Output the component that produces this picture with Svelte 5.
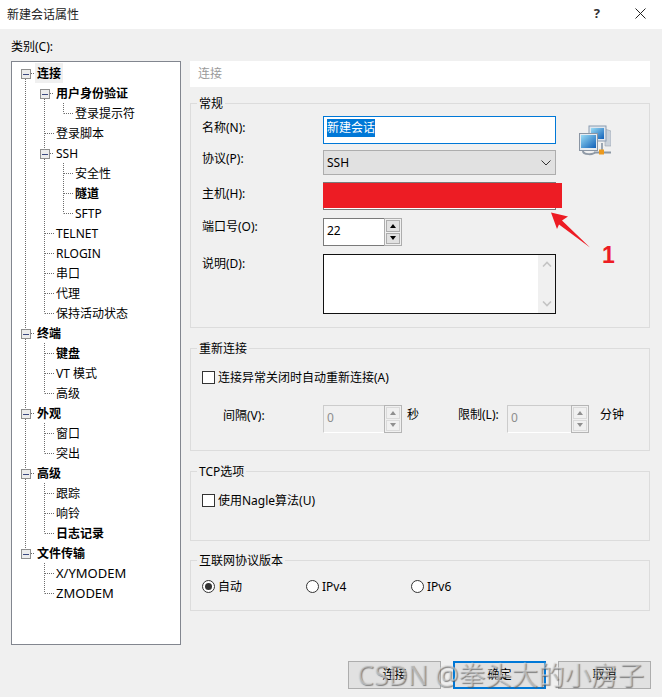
<script>
	// g: one guide cell per tree column. v line, t tee, l elbow, e/d/u expander (both, down, up)
	const rows = [
		{ t: '连接', g: ['d'], b: true, sel: true },
		{ t: '用户身份验证', g: ['v', 'd'], b: true },
		{ t: '登录提示符', g: ['v', 'v', 'l'] },
		{ t: '登录脚本', g: ['v', 't'] },
		{ t: 'SSH', g: ['v', 'e'] },
		{ t: '安全性', g: ['v', 'v', 't'] },
		{ t: '隧道', g: ['v', 'v', 't'], b: true },
		{ t: 'SFTP', g: ['v', 'v', 'l'] },
		{ t: 'TELNET', g: ['v', 't'] },
		{ t: 'RLOGIN', g: ['v', 't'] },
		{ t: '串口', g: ['v', 't'] },
		{ t: '代理', g: ['v', 't'] },
		{ t: '保持活动状态', g: ['v', 'l'] },
		{ t: '终端', g: ['e'], b: true },
		{ t: '键盘', g: ['v', 't'], b: true },
		{ t: 'VT 模式', g: ['v', 't'] },
		{ t: '高级', g: ['v', 'l'] },
		{ t: '外观', g: ['e'], b: true },
		{ t: '窗口', g: ['v', 't'] },
		{ t: '突出', g: ['v', 'l'] },
		{ t: '高级', g: ['e'], b: true },
		{ t: '跟踪', g: ['v', 't'] },
		{ t: '响铃', g: ['v', 't'] },
		{ t: '日志记录', g: ['v', 'l'], b: true },
		{ t: '文件传输', g: ['u'], b: true },
		{ t: 'X/YMODEM', g: ['', 't'], wide: true },
		{ t: 'ZMODEM', g: ['', 'l'], wide: true }
	];
</script>

{#snippet guide(kind)}
	<svg class="guide" width="19" height="20" viewBox="0 0 19 20">
		<g stroke="#6d6d6d" stroke-dasharray="1 1" fill="none">
			{#if kind === 'v' || kind === 't' || kind === 'e' || kind === 'd' || kind === 'u'}
				<path d="M9.5 {kind === 'd' ? 10 : 0}V{kind === 'u' ? 10 : 20}" />
			{/if}
			{#if kind === 'l'}
				<path d="M9.5 0V10.5" />
			{/if}
			{#if kind === 't' || kind === 'l'}
				<path d="M10 10.5H19" />
			{/if}
			{#if kind === 'e' || kind === 'd' || kind === 'u'}
				<path d="M15 10.5H19" />
			{/if}
		</g>
		{#if kind === 'e' || kind === 'd' || kind === 'u'}
			<rect x="5.5" y="6.5" width="9" height="9" fill="#ececec" stroke="#8f8f8f" />
			<path d="M7 11.5H13" stroke="#3c4a80" />
		{/if}
	</svg>
{/snippet}

{#snippet spin(value, off, width = 79)}
	<div class="spin" class:off style="width: {width}px">
		<div class="spin-val">{value}</div>
		<div class="spin-btns">
			<span class="spin-btn"><i class="up"></i></span>
			<span class="spin-btn"><i class="down"></i></span>
		</div>
	</div>
{/snippet}

<div class="dialog">
	<header class="titlebar">
		<span>新建会话属性</span>
		<span class="help">?</span>
		<svg class="close" width="11" height="11" viewBox="0 0 11 11">
			<path d="M.5 .5L10.5 10.5M10.5 .5L.5 10.5" stroke="#222" fill="none" />
		</svg>
	</header>

	<div class="content">
		<aside class="left">
			<div class="cat-label">类别(C):</div>
			<div class="tree">
				{#each rows as row}
					<div class="row">
						{#each row.g as kind}
							{@render guide(kind)}
						{/each}
						<span class="node" class:bold={row.b} class:sel={row.sel} class:wide={row.wide}>{row.t}</span>
					</div>
				{/each}
			</div>
		</aside>

		<main class="right">
			<div class="crumb">连接</div>

			<section class="group general">
				<div class="legend">常规</div>
				<div class="form">
					<label class="pad">名称(N):</label>
					<div class="input active"><span class="selected">新建会话</span></div>
					<svg class="net-icon" width="32" height="32" viewBox="0 0 32 32">
						<defs>
							<linearGradient id="screen" x1="0" y1="0" x2="1" y2="1">
								<stop offset="0" stop-color="#9adcf5" />
								<stop offset="1" stop-color="#0f5fb8" />
							</linearGradient>
						</defs>
						<path d="M26 4l6 2v15h-6z" fill="#c9d1da" stroke="#9aa6b3" stroke-width=".6" />
						<rect x="10" y="1" width="17" height="15" fill="#dfe6ee" stroke="#8a9bb0" />
						<rect x="12" y="3" width="13" height="11" fill="url(#screen)" />
						<rect x=".5" y="8.5" width="18" height="17" fill="#e6ebf1" stroke="#8a95a3" />
						<rect x="2" y="10" width="15" height="13" fill="url(#screen)" />
						<path d="M4 26c0 4 11 4 12 1" fill="none" stroke="#8f99a5" stroke-width="2" />
						<path d="M15 27.5H32" stroke="#8d98a5" stroke-width="2" />
						<path d="M23 18v7" stroke="#9aa6b3" stroke-width="2" />
						<rect x="20" y="24.5" width="5" height="5" fill="#ec9a1e" />
					</svg>

					<label>协议(P):</label>
					<div class="select">
						<span>SSH</span>
						<svg width="10" height="6" viewBox="0 0 10 6">
							<path d="M.5 .5L5 5L9.5 .5" stroke="#333" fill="none" />
						</svg>
					</div>

					<label class="pad">主机(H):</label>
					<div class="input"></div>

					<label>端口号(O):</label>
					{@render spin('22', false)}

					<label class="desc">说明(D):</label>
					<div class="textarea">
						<div class="scroll">
							<svg width="10" height="6" viewBox="0 0 10 6">
								<path d="M1 5.5L5 1.5L9 5.5" stroke="#c4c4c4" stroke-width="1.6" fill="none" />
							</svg>
							<svg width="10" height="6" viewBox="0 0 10 6">
								<path d="M1 .5L5 4.5L9 .5" stroke="#c4c4c4" stroke-width="1.6" fill="none" />
							</svg>
						</div>
					</div>
				</div>
			</section>

			<section class="group reconnect">
				<div class="legend">重新连接</div>
				<div class="check"><span class="box"></span><span class="txt">连接异常关闭时自动重新连接(A)</span></div>
				<div class="retry">
					<span class="retry-label">间隔(V):</span>
					{@render spin('0', true)}
					<span class="unit-sec">秒</span>
					<span class="limit-label">限制(L):</span>
					{@render spin('0', true, 82)}
					<span class="unit-min">分钟</span>
				</div>
			</section>

			<section class="group tcp">
				<div class="legend">TCP选项</div>
				<div class="check"><span class="box"></span><span class="txt">使用Nagle算法(U)</span></div>
			</section>

			<section class="group ipver">
				<div class="legend">互联网协议版本</div>
				<div class="radios">
					<div class="radio r1"><span class="dot on"></span><span class="txt">自动</span></div>
					<div class="radio r2"><span class="dot"></span><span class="txt">IPv4</span></div>
					<div class="radio"><span class="dot"></span><span class="txt">IPv6</span></div>
				</div>
			</section>
		</main>
	</div>

	<footer class="buttons">
		<button>连接</button>
		<button class="primary">确定</button>
		<button>取消</button>
	</footer>

	<!-- annotations pasted over the screenshot -->
	<div class="redact"></div>
	<svg class="arrow" width="50" height="45" viewBox="0 0 50 45">
		<path d="M1 .5L18 4.5L12 8.5L40 35.5L9 12.5L7 17z" fill="#ed1c24" />
	</svg>
	<div class="num">1</div>
	<div class="watermark">CSDN @拳头大的小房子</div>
</div>

<style>
	:global(body) {
		margin: 0;
	}

	.dialog {
		position: relative;
		width: 662px;
		height: 697px;
		overflow: hidden;
		background: #f0f0f0;
		color: #000;
		font-family: "Noto Sans", "Noto Sans CJK SC", sans-serif;
		font-size: 12px;
		line-height: 18px;
	}

	.titlebar {
		display: flex;
		align-items: center;
		height: 29px;
		padding-left: 7px;
		box-sizing: border-box;
		background: #fff;
		color: #222;
	}

	.help {
		margin-left: auto;
		margin-bottom: 3px;
		font-size: 13px;
		font-weight: 700;
		color: #333;
	}

	.close {
		margin-left: 35px;
		margin-right: 16px;
		margin-bottom: 2px;
	}

	.content {
		display: flex;
		height: 616px;
	}

	.left {
		width: 190px;
		padding: 9px 0 0 11px;
		box-sizing: border-box;
	}

	.cat-label {
		margin-bottom: 5px;
	}

	.tree {
		width: 170px;
		height: 584px;
		box-sizing: border-box;
		padding: 1px 0 0 4px;
		background: #fff;
		border: 1px solid #82868f;
	}

	.row {
		display: flex;
		height: 20px;
		white-space: nowrap;
	}

	.guide {
		display: block;
		flex: none;
	}

	.node {
		height: 20px;
		padding: 0 2px;
		line-height: 22px;
	}

	.bold {
		font-weight: 700;
	}

	.wide {
		font-size: 13px;
		line-height: 20px;
	}

	.sel {
		background: #f0f0f0;
	}

	.right {
		width: 460px;
		padding-top: 32px;
	}

	.crumb {
		height: 26px;
		padding-left: 8px;
		line-height: 26px;
		background: #fff;
		color: #9a9a9a;
	}

	.group {
		box-sizing: border-box;
		border: 1px solid #dcdcdc;
		padding-left: 11px;
	}

	.legend {
		width: fit-content;
		margin: -11px 0 0 -5px;
		padding: 2px 2px 0;
		background: #f0f0f0;
	}

	.general {
		height: 225px;
		margin-top: 16px;
	}

	.reconnect {
		height: 103px;
		margin-top: 20px;
	}

	.tcp {
		height: 70px;
		margin-top: 20px;
	}

	.ipver {
		height: 51px;
		margin-top: 19px;
	}

	.form {
		display: grid;
		grid-template-columns: 121px 233px 32px;
		grid-template-rows: 34px 32px 36px 36px 60px;
		align-items: start;
		margin-top: 3px;
	}

	.form label {
		grid-column: 1;
	}

	.form .pad {
		padding-top: 3px;
	}

	.form .desc {
		padding-top: 1px;
	}

	.input {
		grid-column: 2;
		height: 28px;
		box-sizing: border-box;
		padding: 2px 3px;
		background: #fff;
		border: 1px solid #7a7a7a;
	}

	.active {
		border-color: #0078d7;
	}

	.selected {
		display: inline-block;
		background: #0078d7;
		color: #fff;
	}

	.net-icon {
		grid-column: 3;
		grid-row: 1 / span 2;
		margin: 9px 0 0 23px;
	}

	.select {
		grid-column: 2;
		display: flex;
		align-items: center;
		justify-content: space-between;
		height: 25px;
		box-sizing: border-box;
		padding: 0 4px 0 3px;
		background: #e1e1e1;
		border: 1px solid #adadad;
	}

	.spin {
		grid-column: 2;
		display: flex;
		flex: none;
		height: 28px;
		box-sizing: border-box;
	}

	.spin-val {
		flex: 1;
		box-sizing: border-box;
		padding: 3px 3px;
		background: #fff;
		border: 1px solid #7a7a7a;
		border-right: 0;
	}

	.spin-btns {
		display: flex;
		flex: none;
		flex-direction: column;
		gap: 1px;
		width: 18px;
		box-sizing: border-box;
		padding: 1px;
		background: #f0f0f0;
		border: 1px solid #adadad;
	}

	.spin-btn {
		display: flex;
		flex: 1;
		align-items: center;
		justify-content: center;
		background: #e1e1e1;
		border: 1px solid #adadad;
	}

	.spin-btn i {
		width: 0;
		height: 0;
		border-left: 3.5px solid transparent;
		border-right: 3.5px solid transparent;
	}

	.up {
		border-bottom: 4px solid #000;
	}

	.down {
		border-top: 4px solid #000;
	}

	.off .spin-val {
		background: #f0f0f0;
		border-color: #cccccc;
		border-bottom-color: #fff;
		color: #8d8d8d;
	}

	.off .spin-btns {
		border-color: #b5b5b5;
	}

	.off .spin-btn {
		background: #f0f0f0;
		border-color: #dadada;
	}

	.off .up {
		border-bottom-color: #8f8f8f;
	}

	.off .down {
		border-top-color: #8f8f8f;
	}

	.textarea {
		grid-column: 2;
		display: flex;
		justify-content: flex-end;
		height: 60px;
		box-sizing: border-box;
		background: #fff;
		border: 1px solid #111;
	}

	.scroll {
		display: flex;
		flex-direction: column;
		align-items: center;
		justify-content: space-between;
		width: 17px;
		padding: 6px 0;
		box-sizing: border-box;
		background: #f0f0f0;
	}

	.check {
		display: flex;
		align-items: center;
		gap: 3px;
		height: 18px;
		margin-top: 10px;
	}

	.txt {
		padding-top: 2px;
	}

	.box {
		width: 13px;
		height: 13px;
		box-sizing: border-box;
		background: #fff;
		border: 1px solid #333;
	}

	.retry {
		display: flex;
		align-items: flex-start;
		margin-top: 19px;
		height: 28px;
	}

	.retry-label {
		width: 100px;
		margin-left: 21px;
		margin-top: 2px;
	}

	.unit-sec {
		width: 51px;
		margin-left: 5px;
		margin-top: 1px;
	}

	.limit-label {
		width: 49px;
		margin-top: 1px;
	}

	.unit-min {
		margin-left: 11px;
		margin-top: 1px;
	}

	.radios {
		display: flex;
		margin-top: 6px;
	}

	.radio {
		display: flex;
		align-items: center;
		gap: 3px;
	}

	.r1 {
		width: 104px;
	}

	.r2 {
		width: 105px;
	}

	.dot {
		display: flex;
		align-items: center;
		justify-content: center;
		width: 13px;
		height: 13px;
		box-sizing: border-box;
		background: #fff;
		border: 1px solid #333;
		border-radius: 50%;
	}

	.on::after {
		content: '';
		width: 7px;
		height: 7px;
		background: #333;
		border-radius: 50%;
	}

	.buttons {
		display: flex;
		justify-content: flex-end;
		gap: 12px;
		margin-top: 16px;
		padding-right: 11px;
	}

	button {
		width: 93px;
		height: 28px;
		padding: 0;
		font: inherit;
		background: #e1e1e1;
		border: 1px solid #adadad;
	}

	.primary {
		border: 2px solid #0078d7;
	}

	.redact {
		position: absolute;
		left: 323px;
		top: 183px;
		width: 239px;
		height: 25px;
		background: #ed1c24;
	}

	.arrow {
		position: absolute;
		left: 550px;
		top: 212px;
	}

	.num {
		position: absolute;
		left: 602px;
		top: 242px;
		font-family: "Liberation Sans", sans-serif;
		font-size: 23px;
		font-weight: 700;
		line-height: 26px;
		color: #ed1c24;
	}

	.watermark {
		position: absolute;
		left: 357px;
		top: 656px;
		font-size: 26.5px;
		line-height: 38px;
		white-space: nowrap;
		color: rgba(225, 225, 225, 0.55);
		text-shadow: 1px 1px 1px rgba(90, 90, 90, 0.7);
	}
</style>
